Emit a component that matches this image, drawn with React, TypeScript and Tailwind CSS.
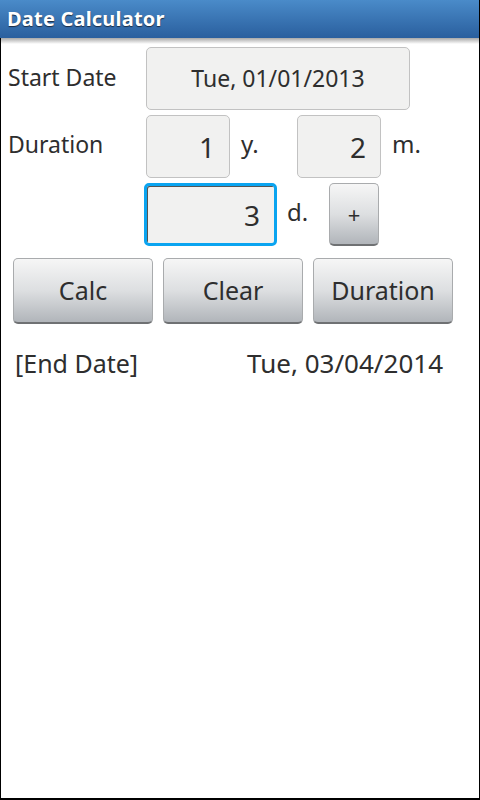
import React from "react";

const font = { fontFamily: '"Noto Sans", "Open Sans", sans-serif' };

function Field({ value, w, align = "center", focused = false, size = "text-[23px]" }: { value: string; w: string; align?: "center" | "right"; focused?: boolean; size?: string }) {
  return (
    <div
      className={`${w} h-[63px] flex items-center ${align === "right" ? "justify-end pr-[14px]" : "justify-center"} ${size} text-[#2e2e2e] bg-[#f1f1f0] rounded-[5px] ${
        focused ? "border-[3px] border-[#0aa4f0] shadow-[inset_1px_1px_0_#555]" : "border border-[#c2c2c2]"
      }`}
    >
      {value}
    </div>
  );
}

function Btn({ label, w, h, size }: { label: string; w: string; h: string; size: string }) {
  return (
    <button
      className={`${w} ${h} ${size} flex items-center justify-center text-[#2e2e2e] rounded-[5px] border border-[#a9abad] border-b-[#6f7173] border-b-2 bg-gradient-to-b from-[#f6f6f6] via-[#dddfe1] to-[#b1b5ba]`}
    >
      {label}
    </button>
  );
}

export default function App() {
  return (
    <div className="w-[480px] h-[800px] flex flex-col bg-white" style={font}>
      <div className="h-[38px] shrink-0 flex items-center pl-[7px] pb-[1px] bg-gradient-to-b from-[#4a8bc9] to-[#2a5f9e] border-r border-black">
        <span className="text-[20px] font-bold text-white tracking-[0.2px] [text-shadow:0_1px_1px_#1a2a40]">Date Calculator</span>
      </div>
      <div className="flex-1 flex flex-col border-x border-b-2 border-black">
        <div className="h-[6px] shrink-0 bg-gradient-to-b from-[#a8a8a8] to-white" />

        <div className="mt-[3px] flex items-center">
          <div className="w-[145px] pl-[7px] text-[23px] text-[#2e2e2e] -mt-[3px]">Start Date</div>
          <Field value="Tue, 01/01/2013" w="w-[264px]" size="text-[23px]" />
        </div>

        <div className="mt-[5px] flex items-center">
          <div className="w-[145px] pl-[7px] text-[23px] text-[#2e2e2e] -mt-[4px]">Duration</div>
          <Field value="1" w="w-[84px]" align="right" size="text-[28px]" />
          <div className="w-[67px] pl-[11px] text-[24px] text-[#2e2e2e] -mt-[6px]">y.</div>
          <Field value="2" w="w-[84px]" align="right" size="text-[28px]" />
          <div className="pl-[11px] text-[24px] text-[#2e2e2e] -mt-[6px]">m.</div>
        </div>

        <div className="mt-[5px] flex items-center">
          <div className="w-[143px]" />
          <Field value="3" w="w-[133px]" align="right" focused size="text-[28px]" />
          <div className="w-[52px] pl-[10px] text-[24px] text-[#2e2e2e] -mt-[6px]">d.</div>
          <Btn label="+" w="w-[50px]" h="h-[63px]" size="text-[22px]" />
        </div>

        <div className="mt-[12px] flex gap-[10px] pl-[12px]">
          <Btn label="Calc" w="w-[140px]" h="h-[66px]" size="text-[25px]" />
          <Btn label="Clear" w="w-[140px]" h="h-[66px]" size="text-[25px]" />
          <Btn label="Duration" w="w-[140px]" h="h-[66px]" size="text-[25px]" />
        </div>

        <div className="mt-[20px] flex items-center justify-between pl-[14px] pr-[36px] text-[#2e2e2e]">
          <span className="text-[25px]">[End Date]</span>
          <span className="text-[26px]">Tue, 03/04/2014</span>
        </div>
      </div>
    </div>
  );
}
